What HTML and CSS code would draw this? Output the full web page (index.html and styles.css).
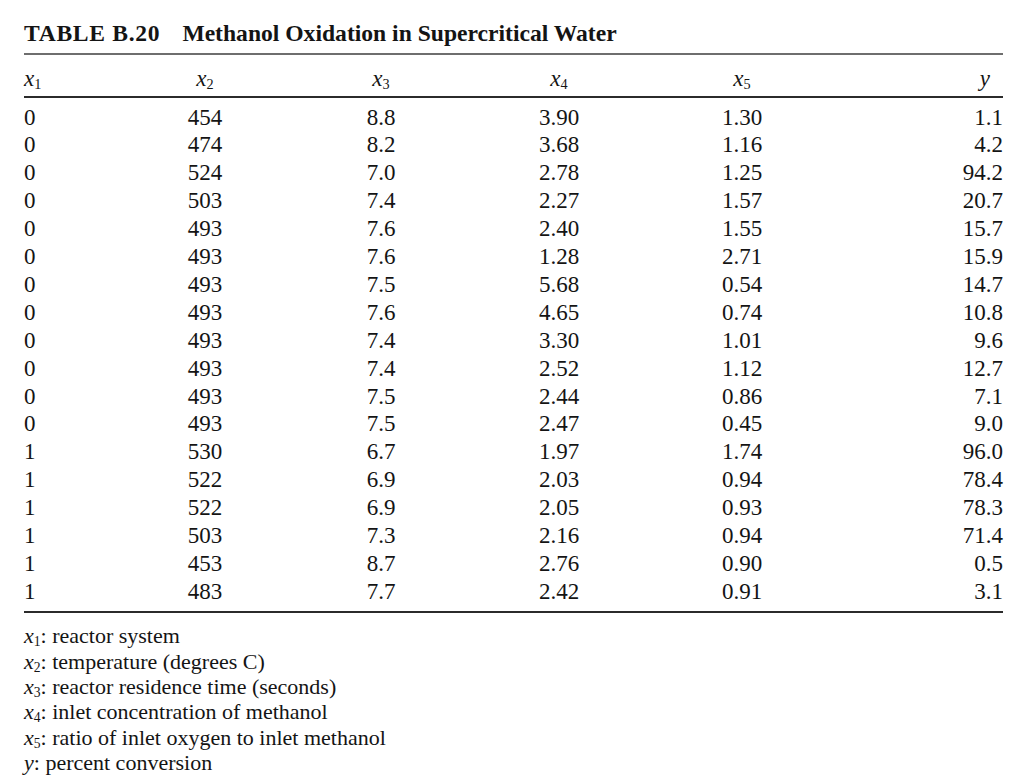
FILE: index.html
```html
<!DOCTYPE html>
<html lang="en">
<head>
<meta charset="utf-8">
<title>TABLE B.20 Methanol Oxidation in Supercritical Water</title>
<link rel="stylesheet" href="styles.css">
</head>
<body>
<div class="page">
  <h1 class="title"><span class="label">TABLE B.20</span><span class="name">Methanol Oxidation in Supercritical Water</span></h1>
  <table class="data">
    <colgroup>
      <col class="c1"><col class="c2"><col class="c3"><col class="c4"><col class="c5"><col class="c6">
    </colgroup>
    <thead>
      <tr>
        <th class="left"><i class="v">x</i><sub>1</sub></th>
        <th><i class="v">x</i><sub>2</sub></th>
        <th><i class="v">x</i><sub>3</sub></th>
        <th><i class="v">x</i><sub>4</sub></th>
        <th><i class="v">x</i><sub>5</sub></th>
        <th class="right yhead"><i class="v">y</i></th>
      </tr>
    </thead>
    <tbody>
      <tr><td class="left">0</td><td>454</td><td>8.8</td><td>3.90</td><td>1.30</td><td class="right">1.1</td></tr>
      <tr><td class="left">0</td><td>474</td><td>8.2</td><td>3.68</td><td>1.16</td><td class="right">4.2</td></tr>
      <tr><td class="left">0</td><td>524</td><td>7.0</td><td>2.78</td><td>1.25</td><td class="right">94.2</td></tr>
      <tr><td class="left">0</td><td>503</td><td>7.4</td><td>2.27</td><td>1.57</td><td class="right">20.7</td></tr>
      <tr><td class="left">0</td><td>493</td><td>7.6</td><td>2.40</td><td>1.55</td><td class="right">15.7</td></tr>
      <tr><td class="left">0</td><td>493</td><td>7.6</td><td>1.28</td><td>2.71</td><td class="right">15.9</td></tr>
      <tr><td class="left">0</td><td>493</td><td>7.5</td><td>5.68</td><td>0.54</td><td class="right">14.7</td></tr>
      <tr><td class="left">0</td><td>493</td><td>7.6</td><td>4.65</td><td>0.74</td><td class="right">10.8</td></tr>
      <tr><td class="left">0</td><td>493</td><td>7.4</td><td>3.30</td><td>1.01</td><td class="right">9.6</td></tr>
      <tr><td class="left">0</td><td>493</td><td>7.4</td><td>2.52</td><td>1.12</td><td class="right">12.7</td></tr>
      <tr><td class="left">0</td><td>493</td><td>7.5</td><td>2.44</td><td>0.86</td><td class="right">7.1</td></tr>
      <tr><td class="left">0</td><td>493</td><td>7.5</td><td>2.47</td><td>0.45</td><td class="right">9.0</td></tr>
      <tr><td class="left">1</td><td>530</td><td>6.7</td><td>1.97</td><td>1.74</td><td class="right">96.0</td></tr>
      <tr><td class="left">1</td><td>522</td><td>6.9</td><td>2.03</td><td>0.94</td><td class="right">78.4</td></tr>
      <tr><td class="left">1</td><td>522</td><td>6.9</td><td>2.05</td><td>0.93</td><td class="right">78.3</td></tr>
      <tr><td class="left">1</td><td>503</td><td>7.3</td><td>2.16</td><td>0.94</td><td class="right">71.4</td></tr>
      <tr><td class="left">1</td><td>453</td><td>8.7</td><td>2.76</td><td>0.90</td><td class="right">0.5</td></tr>
      <tr class="last"><td class="left">1</td><td>483</td><td>7.7</td><td>2.42</td><td>0.91</td><td class="right">3.1</td></tr>
    </tbody>
  </table>
  <ul class="notes">
    <li><i class="v">x</i><sub>1</sub>: reactor system</li>
    <li><i class="v">x</i><sub>2</sub>: temperature (degrees C)</li>
    <li><i class="v">x</i><sub>3</sub>: reactor residence time (seconds)</li>
    <li><i class="v">x</i><sub>4</sub>: inlet concentration of methanol</li>
    <li><i class="v">x</i><sub>5</sub>: ratio of inlet oxygen to inlet methanol</li>
    <li><i class="v">y</i>: percent conversion</li>
  </ul>
</div>
</body>
</html>
```

FILE: styles.css
```css
html, body {
  margin: 0;
  padding: 0;
  background: #ffffff;
}

body {
  font-family: "Liberation Serif", "Times New Roman", serif;
  color: #141414;
}

.page {
  width: 979px;
  padding: 19px 0 0 24px;
}

.title {
  margin: 0;
  font-size: 23.6px;
  line-height: 28px;
  font-weight: bold;
  color: #141414;
  display: flex;
  gap: 22px;
  padding-bottom: 6px;
  border-bottom: 2px solid #6e6e6e;
}

.title .label {
  letter-spacing: 0.7px;
}

.data {
  width: 979px;
  border-collapse: collapse;
  table-layout: fixed;
  font-size: 23px;
}

.c1 { width: 94px; }
.c2 { width: 174px; }
.c3 { width: 178px; }
.c4 { width: 178px; }
.c5 { width: 188px; }
.c6 { width: 167px; }

.data th,
.data td {
  padding: 0;
  font-weight: normal;
  text-align: center;
  white-space: nowrap;
}

.data th {
  line-height: 28px;
  padding-top: 10px;
  padding-bottom: 3px;
  border-bottom: 2px solid #2b2b2b;
}

.data td {
  line-height: 27.9px;
}

.data tbody tr:first-child td {
  padding-top: 5.5px;
}

.data tr.last td {
  padding-bottom: 5px;
  border-bottom: 2px solid #2b2b2b;
}

.data .left { text-align: left; }
.data .right { text-align: right; }
.data .yhead { padding-right: 13px; }

.v {
  font-family: "Liberation Serif", serif;
  font-style: italic;
  font-synthesis: style;
  line-height: 1;
}

sub {
  font-size: 0.62em;
  line-height: 1;
  vertical-align: baseline;
  position: relative;
  top: 0.22em;
  font-style: normal;
}

.notes {
  list-style: none;
  margin: 0;
  padding: 10.5px 0 0 0;
  font-size: 22px;
  line-height: 25.4px;
}

.notes li {
  margin: 0;
  height: 25.4px;
}
```
